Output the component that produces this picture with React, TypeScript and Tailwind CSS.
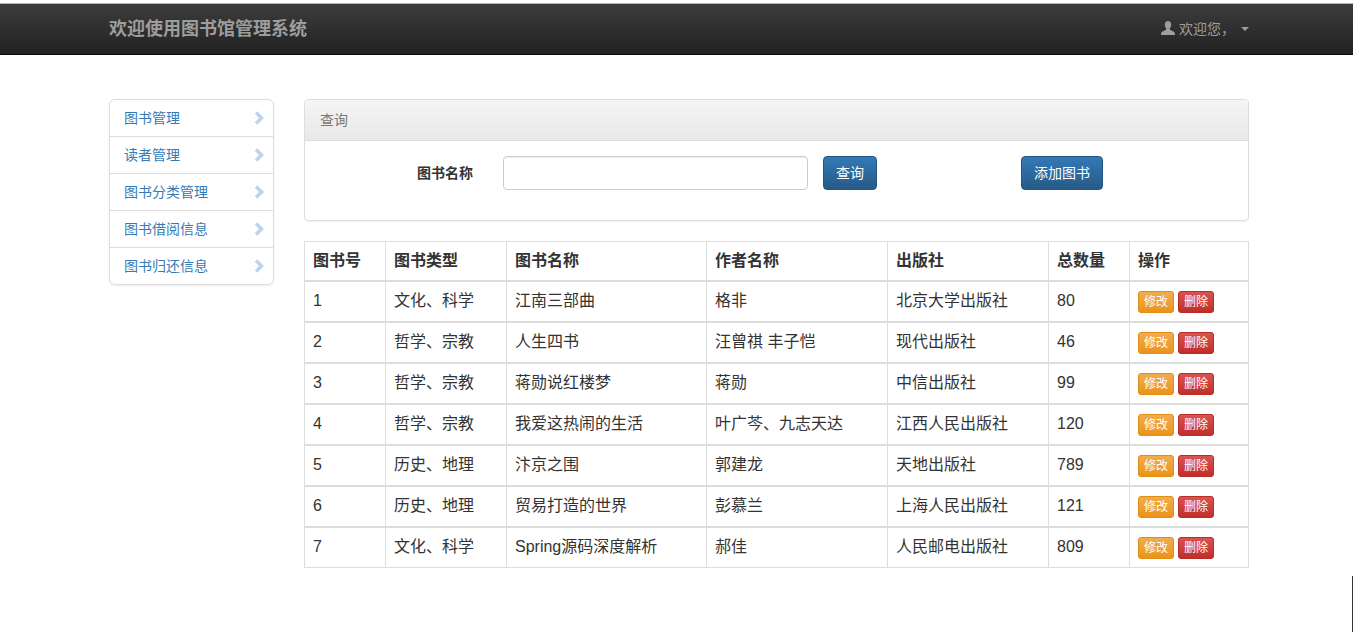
const menu = ['图书管理', '读者管理', '图书分类管理', '图书借阅信息', '图书归还信息'];

const headers = ['图书号', '图书类型', '图书名称', '作者名称', '出版社', '总数量', '操作'];

const books = [
  ['1', '文化、科学', '江南三部曲', '格非', '北京大学出版社', '80'],
  ['2', '哲学、宗教', '人生四书', '汪曾祺 丰子恺', '现代出版社', '46'],
  ['3', '哲学、宗教', '蒋勋说红楼梦', '蒋勋', '中信出版社', '99'],
  ['4', '哲学、宗教', '我爱这热闹的生活', '叶广芩、九志天达', '江西人民出版社', '120'],
  ['5', '历史、地理', '汴京之围', '郭建龙', '天地出版社', '789'],
  ['6', '历史、地理', '贸易打造的世界', '彭慕兰', '上海人民出版社', '121'],
  ['7', '文化、科学', 'Spring源码深度解析', '郝佳', '人民邮电出版社', '809'],
];

function Navbar() {
  return (
    <div className="pt-[3px]">
      <nav className="h-[52px] border-t border-t-[#b4b4b4] border-b border-b-[#080808] bg-gradient-to-b from-[#3c3c3c] to-[#222222]">
        <div className="ml-[109px] flex h-full w-[1140px] items-center justify-between">
          <span className="text-[18px] font-bold text-[#9d9d9d]">欢迎使用图书馆管理系统</span>
          <span className="flex items-center text-[14px] text-[#9d9d9d]">
            <svg width="14" height="14" viewBox="0 0 14 14" className="mr-[4px] mb-[2px]">
              <path
                d="M0 14c0-2.2.6-3.2 2-3.8 1.4-.6 2.9-1 3.2-1.9.1-.4 0-.8-.3-1.2C4.200 6.200 3.800 5 3.800 3.600 3.800 1.400 5.100 0 7 0s3.200 1.400 3.200 3.600c0 1.400-.4 2.600-1.100 3.500-.3.400-.4.800-.3 1.200.3.900 1.800 1.300 3.200 1.900 1.400.6 2 1.600 2 3.800z"
                fill="#9d9d9d"
              />
            </svg>
            欢迎您，
            <span className="ml-[6px] h-0 w-0 border-x-[4px] border-t-[4px] border-x-transparent border-t-[#9d9d9d]" />
          </span>
        </div>
      </nav>
    </div>
  );
}

function Sidebar() {
  return (
    <ul className="w-[165px] shrink-0 self-start overflow-hidden rounded-[6px] border border-[#dddddd] shadow-[0_1px_2px_rgba(0,0,0,0.075)]">
      {menu.map((item, i) => (
        <li
          key={item}
          className={`flex items-center justify-between pl-[14px] pr-[9px] text-[14px] text-[#337ab7] ${
            i > 0 ? 'h-[37px] border-t border-[#dddddd]' : 'h-[36px]'
          }`}
        >
          {item}
          <svg width="10" height="14" viewBox="0 0 10 14">
            <path d="M2 1.500 7.500 7 2 12.500" fill="none" stroke="#bcd3e8" strokeWidth="3.500" />
          </svg>
        </li>
      ))}
    </ul>
  );
}

function SearchPanel() {
  return (
    <div className="h-[122px] overflow-hidden rounded-[4px] border border-[#dddddd] shadow-[0_1px_1px_rgba(0,0,0,0.05)]">
      <div className="flex h-[41px] items-center border-b border-[#dddddd] bg-gradient-to-b from-[#f5f5f5] to-[#e8e8e8] pl-[15px] text-[14px] text-[#777777]">
        查询
      </div>
      <div className="flex items-start pt-[15px]">
        <label className="ml-[112px] mt-[7px] w-[56px] text-[14px] font-bold text-[#333333]">图书名称</label>
        <input
          type="text"
          className="ml-[30px] h-[34px] w-[305px] rounded-[4px] border border-[#cccccc] bg-white shadow-[inset_0_1px_1px_rgba(0,0,0,0.075)]"
        />
        <button className="ml-[15px] h-[34px] w-[54px] rounded-[4px] border border-[#245580] bg-gradient-to-b from-[#337ab7] to-[#265a88] text-[14px] text-white">
          查询
        </button>
        <button className="ml-[144px] h-[34px] w-[82px] rounded-[4px] border border-[#245580] bg-gradient-to-b from-[#337ab7] to-[#265a88] text-[14px] text-white">
          添加图书
        </button>
      </div>
    </div>
  );
}

function BookTable() {
  return (
    <table className="mt-[20px] w-[944px] table-fixed border-collapse text-[16px] text-[#333333]">
      <colgroup>
        <col className="w-[81px]" />
        <col className="w-[121px]" />
        <col className="w-[200px]" />
        <col className="w-[181px]" />
        <col className="w-[161px]" />
        <col className="w-[81px]" />
        <col className="w-[119px]" />
      </colgroup>
      <thead>
        <tr className="h-[39px]">
          {headers.map((h) => (
            <th key={h} className="border border-b-2 border-[#dddddd] px-[8px] text-left font-bold">
              {h}
            </th>
          ))}
        </tr>
      </thead>
      <tbody>
        {books.map((row, r) => {
          const cellClass = `border border-[#dddddd] px-[8px] ${r < books.length - 1 ? 'border-b-2' : ''}`;
          return (
            <tr key={row[0]} className="h-[41px]">
              {row.map((cell, i) => (
                <td key={i} className={cellClass}>
                  {cell}
                </td>
              ))}
              <td className={cellClass}>
                <div className="mt-[2px] flex gap-[4px]">
                  <button className="h-[22px] w-[36px] rounded-[3px] border border-[#e38d13] bg-gradient-to-b from-[#f0ad4e] to-[#eb9316] text-[12px] text-white">
                    修改
                  </button>
                  <button className="h-[22px] w-[36px] rounded-[3px] border border-[#b92c28] bg-gradient-to-b from-[#d9534f] to-[#c12e2a] text-[12px] text-white">
                    删除
                  </button>
                </div>
              </td>
            </tr>
          );
        })}
      </tbody>
    </table>
  );
}

export default function App() {
  return (
    <div className="relative h-[632px] overflow-hidden bg-white font-['Liberation_Sans','Noto_Sans_CJK_SC',sans-serif]">
      <Navbar />
      <div className="ml-[109px] mt-[44px] flex w-[1140px] gap-[30px]">
        <Sidebar />
        <main className="w-[945px]">
          <SearchPanel />
          <BookTable />
        </main>
      </div>
      {/* stray window edge in the corner of the capture */}
      <div className="absolute bottom-0 right-0 h-[56px] w-px bg-[#333333]" />
    </div>
  );
}
